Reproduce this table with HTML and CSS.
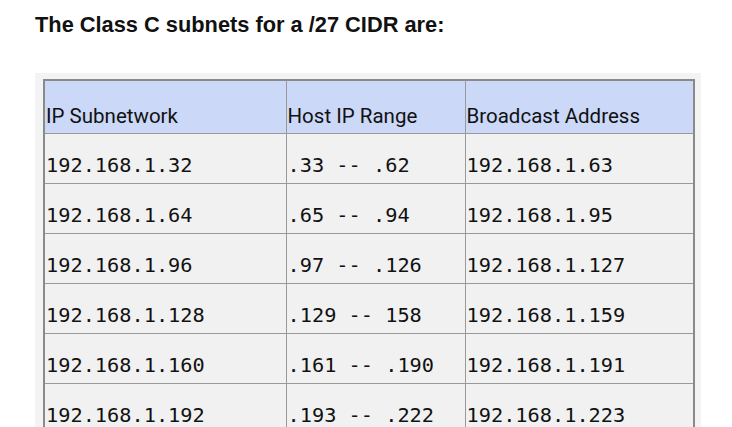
FILE: index.html
```html
<!DOCTYPE html>
<html>
<head>
<meta charset="utf-8">
<link rel="stylesheet" href="styles.css">
</head>
<body>
<div class="page">
  <h2 class="title">The Class C subnets for a /27 CIDR are:</h2>
  <div class="panel">
    <table class="subnets">
      <thead>
        <tr><th class="c1">IP Subnetwork</th><th class="c2">Host IP Range</th><th class="c3">Broadcast Address</th></tr>
      </thead>
      <tbody>
        <tr><td>192.168.1.32</td><td>.33 -- .62</td><td>192.168.1.63</td></tr>
        <tr><td>192.168.1.64</td><td>.65 -- .94</td><td>192.168.1.95</td></tr>
        <tr><td>192.168.1.96</td><td>.97 -- .126</td><td>192.168.1.127</td></tr>
        <tr><td>192.168.1.128</td><td>.129 -- 158</td><td>192.168.1.159</td></tr>
        <tr><td>192.168.1.160</td><td>.161 -- .190</td><td>192.168.1.191</td></tr>
        <tr><td>192.168.1.192</td><td>.193 -- .222</td><td>192.168.1.223</td></tr>
      </tbody>
    </table>
  </div>
</div>
</body>
</html>
```

FILE: styles.css
```css
html, body {
  margin: 0;
  padding: 0;
  background: #ffffff;
  overflow: hidden;
}
.page {
  padding: 0 0 0 35px;
  width: 666px;
}
.title {
  margin: 0;
  padding-top: 12px;
  height: 73px;
  box-sizing: border-box;
  font-family: "Liberation Sans", Arial, sans-serif;
  font-weight: bold;
  font-size: 21.8px;
  line-height: 26px;
  color: #111;
}
.panel {
  background: #f3f3f3;
  padding: 6px 6px 0 8px;
}
.subnets {
  border-collapse: collapse;
  border: 2px solid #8a8a8a;
  border-bottom: none;
  background: #f1f1f1;
}
.subnets th, .subnets td {
  border: 1px solid #999;
  padding: 0 0 0 1px;
  text-align: left;
  vertical-align: bottom;
  color: #111;
}
.subnets th {
  background: #cbd8f8;
  height: 53px;
  padding-bottom: 5px;
  box-sizing: border-box;
  font-family: Roboto, "Liberation Sans", sans-serif;
  font-weight: normal;
  font-size: 20.5px;
  line-height: 24px;
}
.subnets td {
  height: 50px;
  box-sizing: border-box;
  padding-bottom: 6px;
  font-family: "DejaVu Sans Mono", "Liberation Mono", monospace;
  font-size: 20.3px;
  line-height: 24px;
}
.c1 { width: 242px; }
.c2 { width: 179px; }
.c3 { width: 229px; }
```
